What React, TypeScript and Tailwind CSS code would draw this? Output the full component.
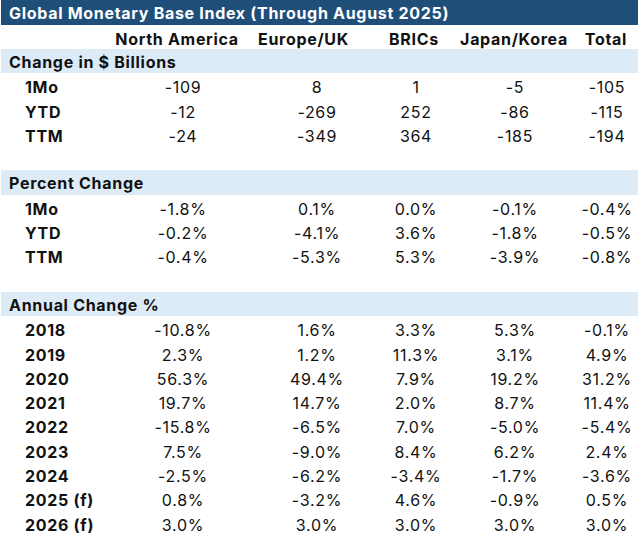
const cols = ["North America", "Europe/UK", "BRICs", "Japan/Korea", "Total"];

const sections: { title: string; rows: [string, string[]][] }[] = [
  {
    title: "Change in $ Billions",
    rows: [
      ["1Mo", ["-109", "8", "1", "-5", "-105"]],
      ["YTD", ["-12", "-269", "252", "-86", "-115"]],
      ["TTM", ["-24", "-349", "364", "-185", "-194"]],
    ],
  },
  {
    title: "Percent Change",
    rows: [
      ["1Mo", ["-1.8%", "0.1%", "0.0%", "-0.1%", "-0.4%"]],
      ["YTD", ["-0.2%", "-4.1%", "3.6%", "-1.8%", "-0.5%"]],
      ["TTM", ["-0.4%", "-5.3%", "5.3%", "-3.9%", "-0.8%"]],
    ],
  },
  {
    title: "Annual Change %",
    rows: [
      ["2018", ["-10.8%", "1.6%", "3.3%", "5.3%", "-0.1%"]],
      ["2019", ["2.3%", "1.2%", "11.3%", "3.1%", "4.9%"]],
      ["2020", ["56.3%", "49.4%", "7.9%", "19.2%", "31.2%"]],
      ["2021", ["19.7%", "14.7%", "2.0%", "8.7%", "11.4%"]],
      ["2022", ["-15.8%", "-6.5%", "7.0%", "-5.0%", "-5.4%"]],
      ["2023", ["7.5%", "-9.0%", "8.4%", "6.2%", "2.4%"]],
      ["2024", ["-2.5%", "-6.2%", "-3.4%", "-1.7%", "-3.6%"]],
      ["2025 (f)", ["0.8%", "-3.2%", "4.6%", "-0.9%", "0.5%"]],
      ["2026 (f)", ["3.0%", "3.0%", "3.0%", "3.0%", "3.0%"]],
    ],
  },
];

// header labels sit a little left of the value centres
const headerPad = ["pr-[12px]", "pr-[30px]", "pr-[4px]", "pr-[2px]", "pr-[2px]"];

const grid = "grid grid-cols-[108px_150px_118px_80px_118px_66px]";

export default function App() {
  return (
    <div
      className="w-[640px] h-[549px] bg-white text-[#111] text-[16px] tracking-[0.7px]"
      style={{ fontFamily: "Inter, 'Noto Sans', sans-serif" }}
    >
      <div className="mx-[1px] mr-[2px] h-[25px] bg-[#1f4e79] text-white font-bold flex items-center pl-[8px]">
        Global Monetary Base Index (Through August 2025)
      </div>
      <div className={`${grid} h-[24px] items-center font-bold pt-[2px]`}>
        <div />
        {cols.map((c, i) => (
          <div key={c} className={`text-center whitespace-nowrap ${headerPad[i]}`}>
            {c}
          </div>
        ))}
      </div>
      {sections.map((s, si) => (
        <div key={s.title}>
          {si > 0 && <div className="h-[24.3px]" />}
          <div className="mx-[1px] mr-[2px] h-[24.3px] bg-[#ddebf7] font-bold flex items-center pl-[8px] pt-[1px]">
            {s.title}
          </div>
          {s.rows.map(([label, vals]) => (
            <div key={label} className={`${grid} h-[24.3px] items-center pt-[2px]`}>
              <div className="pl-[25px] font-bold">{label}</div>
              {vals.map((v, i) => (
                <div key={i} className="text-center">
                  {v}
                </div>
              ))}
            </div>
          ))}
        </div>
      ))}
    </div>
  );
}
